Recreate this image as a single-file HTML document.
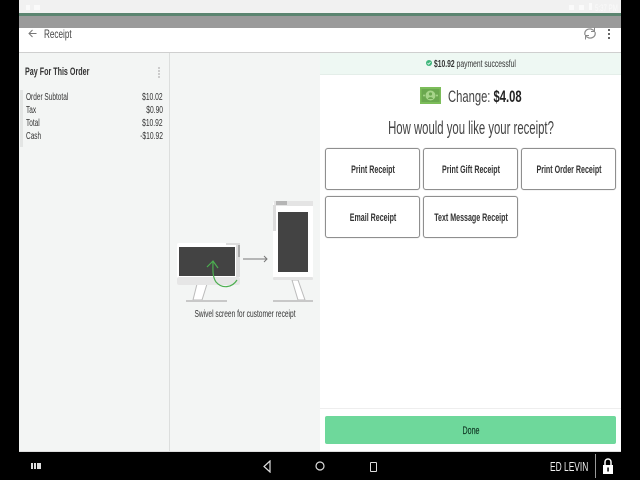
<!DOCTYPE html>
<html><head><meta charset="utf-8">
<style>
html,body{margin:0;padding:0;background:#000;}
body{width:640px;height:480px;position:relative;overflow:hidden;font-family:"Liberation Sans",sans-serif;filter:blur(.3px);}
.b{position:absolute;}
.t{position:absolute;white-space:nowrap;transform-origin:0 50%;transform:scaleX(var(--s,.65));color:#333;line-height:12px;}
.c{position:absolute;white-space:nowrap;transform:translateX(-50%) scaleX(var(--s,.645));color:#2b2b2b;line-height:14px;}
.r{position:absolute;white-space:nowrap;transform-origin:100% 50%;transform:scaleX(.67);color:#333;line-height:12px;text-align:right;}
.btn{position:absolute;box-sizing:border-box;border:1px solid #8f8f8f;border-radius:3px;background:#fff;width:95px;height:42px;box-shadow:0 0 1px #bbb;}
</style></head>
<body>
<div class="b" style="left:19px;top:0;width:602px;height:13px;background:#f1f1f1"></div>
<div class="b" style="left:19px;top:13px;width:602px;height:3px;background:#5b8570"></div>
<div class="b" style="left:19px;top:16px;width:602px;height:12px;background:#9a9a9a"></div>
<div class="b" style="left:19px;top:28px;width:602px;height:24px;background:#fff"></div>
<div class="b" style="left:19px;top:52px;width:602px;height:1px;background:#cfcfcf"></div>
<div class="b" style="left:19px;top:53px;width:150px;height:398px;background:#f3f5f4"></div>
<div class="b" style="left:169px;top:53px;width:1px;height:398px;background:#dcdedd"></div>
<div class="b" style="left:170px;top:53px;width:150px;height:398px;background:#f3f5f4"></div>
<div class="b" style="left:320px;top:53px;width:301px;height:398px;background:#fff"></div>
<div class="b" style="left:320px;top:53px;width:301px;height:21px;background:#eef8f3;border-bottom:1px solid #e4eee9"></div>
<div class="b" style="left:19px;top:451px;width:602px;height:1px;background:#ddd"></div>

<!-- status bar icons -->
<div class="b" style="left:26px;top:5px;width:4px;height:5px;background:#fafafa"></div>
<div class="b" style="left:34px;top:5px;width:6px;height:5px;background:#fafafa"></div>
<div class="b" style="left:569px;top:5px;width:5px;height:5px;background:#fafafa"></div>
<div class="b" style="left:579px;top:5px;width:5px;height:5px;background:#fafafa"></div>
<div class="b" style="left:589px;top:3px;width:3px;height:7px;background:#fafafa"></div>
<div class="t" style="left:595px;top:2px;font-size:9px;color:#fafafa;--s:.68">5:37 PM</div>

<!-- header -->
<svg class="b" style="left:27px;top:28px" width="12" height="12" viewBox="0 0 12 12"><path d="M9.500 5.500H2.500M5.500 2L2 5.500 5.500 9" fill="none" stroke="#777" stroke-width="1"/></svg>
<div class="t" style="left:44px;top:28px;font-size:12px;color:#444;--s:.68">Receipt</div>
<svg class="b" style="left:583px;top:26px" width="14" height="15" viewBox="0 0 14 15"><path d="M2 9C1 5 4 2.500 8 3L11 4.500M12 6C13 10 10 12.500 6 12L3 10.500" fill="none" stroke="#888" stroke-width="1.200"/><path d="M11.500 1.500V5.500H8M2.500 13.500V9.500H6" fill="none" stroke="#888" stroke-width="1"/></svg>
<div class="b" style="left:608px;top:29px;width:2px;height:2px;background:#666;box-shadow:0 4px 0 #666,0 8px 0 #666"></div>

<!-- left panel -->
<div class="t" style="left:25px;top:66px;font-size:11px;font-weight:bold;color:#333">Pay For This Order</div>
<div class="b" style="left:158px;top:67px;width:2px;height:2px;background:#ccc;box-shadow:0 3px 0 #ccc,0 6px 0 #ccc,0 9px 0 #ccc"></div>
<div class="b" style="left:20px;top:90px;width:3px;height:57px;background:#e3e5e4"></div>
<div class="t" style="left:26px;top:92px;font-size:10px">Order Subtotal</div>
<div class="t" style="left:26px;top:105px;font-size:10px">Tax</div>
<div class="t" style="left:26px;top:118px;font-size:10px">Total</div>
<div class="t" style="left:26px;top:131px;font-size:10px">Cash</div>
<div class="r" style="right:477px;top:92px;font-size:10px">$10.02</div>
<div class="r" style="right:477px;top:105px;font-size:10px">$0.90</div>
<div class="r" style="right:477px;top:118px;font-size:10px">$10.92</div>
<div class="r" style="right:477px;top:131px;font-size:10px">-$10.92</div>

<!-- illustration -->
<svg class="b" style="left:170px;top:190px" width="150" height="125" viewBox="0 0 150 125">
<path d="M27 94H37L32 110H23Z" fill="#fff" stroke="#bbb" stroke-width="1"/>
<rect x="16" y="110" width="41" height="2" fill="#c8c8c8"/>
<rect x="7" y="53" width="63" height="42" rx="2" fill="#fff"/>
<rect x="7" y="87" width="63" height="8" rx="2" fill="#e6e6e6"/>
<rect x="66" y="54" width="4" height="33" fill="#ddd"/>
<rect x="68" y="55" width="2" height="12" fill="#aaa"/>
<rect x="56" y="53" width="14" height="2" fill="#ddd"/>
<rect x="9" y="57" width="56" height="29" fill="#434343"/>
<path d="M67 90C62 98 52 99 46 92C42 86 43 78 43 71" fill="none" stroke="#4caf50" stroke-width="1.200"/>
<path d="M37 77L43 71 48 78" fill="none" stroke="#4caf50" stroke-width="1.200"/>
<path d="M73 69H97M94 66L97 69 94 72" fill="none" stroke="#777" stroke-width="1"/>
<path d="M122 90H128L135 110H128Z" fill="#fff" stroke="#bbb" stroke-width="1"/>
<rect x="103" y="110" width="40" height="2" fill="#c8c8c8"/>
<rect x="103" y="11" width="40" height="79" rx="3" fill="#fff"/>
<rect x="103" y="87" width="40" height="3" rx="1" fill="#e4e4e4"/>
<rect x="104" y="11" width="39" height="5" fill="#e4e4e4"/>
<rect x="106" y="11" width="11" height="4" fill="#b5b5b5"/>
<rect x="103" y="15" width="3" height="26" fill="#ddd"/>
<rect x="108" y="22" width="30" height="60" fill="#434343"/>
</svg>
<div class="c" style="left:245px;top:307px;font-size:10.500px;line-height:14px;color:#333;--s:.63">Swivel screen for customer receipt</div>

<!-- banner -->
<svg class="b" style="left:426px;top:60px" width="6" height="6" viewBox="0 0 6 6"><circle cx="3" cy="3" r="3" fill="#3fb67b"/><path d="M1.500 3L2.700 4.200 4.500 2" fill="none" stroke="#fff" stroke-width=".7"/></svg>
<div class="t" style="left:434px;top:59px;font-size:10px;color:#333;--s:.676"><b>$10.92</b> payment successful</div>

<!-- change -->
<svg class="b" style="left:420px;top:87px" width="21" height="17" viewBox="0 0 21 17"><rect width="21" height="17" fill="#7cbd5a"/><rect x="1.500" y="2" width="18" height="13" fill="#6aa84f"/><circle cx="10.500" cy="8.500" r="5" fill="#a6d58a"/><circle cx="10.500" cy="7" r="1.600" fill="#6aa84f"/><path d="M8 12C8 9.500 13 9.500 13 12Z" fill="#6aa84f"/><circle cx="4" cy="8.500" r="1" fill="#a6d58a"/><circle cx="17" cy="8.500" r="1" fill="#a6d58a"/></svg>
<div class="t" style="left:448px;top:89px;font-size:17px;line-height:16px;color:#444;--s:.66">Change: <b style="color:#222">$4.08</b></div>
<div class="c" style="left:470.500px;top:119px;font-size:18px;line-height:18px;color:#444;--s:.63">How would you like your receipt?</div>

<!-- buttons -->
<div class="btn" style="left:325px;top:148px"></div>
<div class="btn" style="left:423px;top:148px"></div>
<div class="btn" style="left:521px;top:148px"></div>
<div class="btn" style="left:325px;top:196px"></div>
<div class="btn" style="left:423px;top:196px"></div>
<div class="c" style="left:372.500px;top:163px;font-size:11px;font-weight:bold;color:#333">Print Receipt</div>
<div class="c" style="left:470.500px;top:163px;font-size:11px;font-weight:bold;color:#333">Print Gift Receipt</div>
<div class="c" style="left:568.500px;top:163px;font-size:11px;font-weight:bold;color:#333">Print Order Receipt</div>
<div class="c" style="left:372.500px;top:211px;font-size:11px;font-weight:bold;color:#333">Email Receipt</div>
<div class="c" style="left:470.500px;top:211px;font-size:11px;font-weight:bold;color:#333">Text Message Receipt</div>

<!-- done -->
<div class="b" style="left:320px;top:408px;width:301px;height:1px;background:#eee"></div>
<div class="b" style="left:325px;top:416px;width:291px;height:28px;background:#6ed89b;border-radius:2px"></div>
<div class="c" style="left:470.500px;top:424px;font-size:11px;color:#123a26;-webkit-text-stroke:.2px #123a26">Done</div>

<!-- nav bar -->
<div class="b" style="left:31px;top:463px;width:2px;height:6px;background:#ddd;box-shadow:3px 0 0 #ddd,6px 0 0 #ddd,8px 0 0 #ddd"></div>
<svg class="b" style="left:262px;top:460px" width="10" height="13" viewBox="0 0 10 13"><path d="M8 1L2 6.500 8 12Z" fill="none" stroke="#ddd" stroke-width="1.200"/></svg>
<svg class="b" style="left:315px;top:461px" width="10" height="10" viewBox="0 0 10 10"><circle cx="5" cy="5" r="4" fill="none" stroke="#ddd" stroke-width="1.200"/></svg>
<div class="b" style="left:370px;top:462px;width:5px;height:8px;border:1px solid #ddd;border-radius:1px"></div>
<div class="t" style="left:550px;top:460px;font-size:13px;line-height:14px;color:#eee;--s:.647">ED LEVIN</div>
<div class="b" style="left:595px;top:454px;width:1px;height:24px;background:#999"></div>
<svg class="b" style="left:602px;top:457px" width="12" height="18" viewBox="0 0 12 18"><path d="M3 8V5C3 1 9 1 9 5V8" fill="none" stroke="#fff" stroke-width="1.500"/><rect x="1" y="8" width="10" height="9" fill="#fff"/><rect x="5.300" y="10.500" width="1.500" height="4" fill="#000"/></svg>
</body></html>
